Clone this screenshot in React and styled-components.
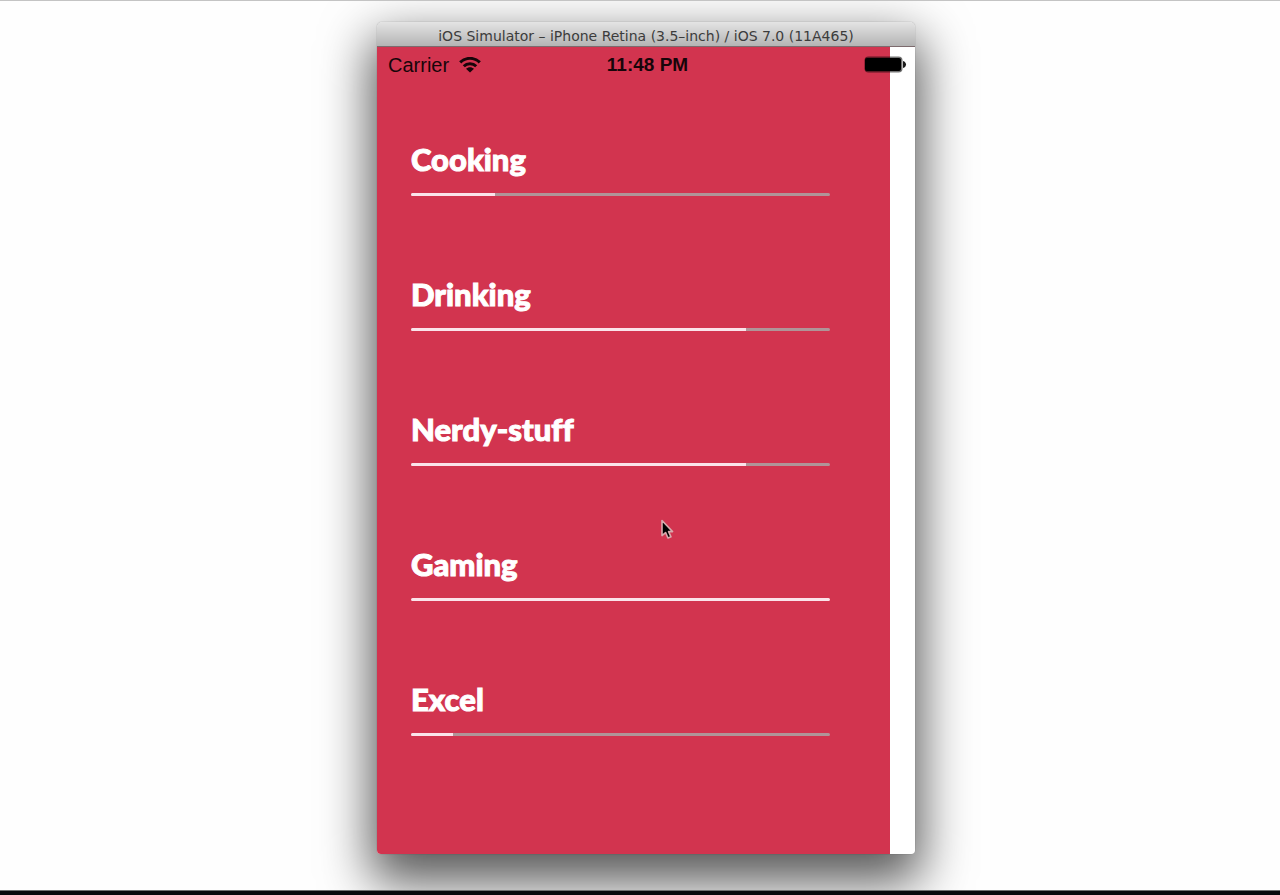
import React from 'react'
import styled, { createGlobalStyle } from 'styled-components'

const categories = [
  { id: 'cooking', name: 'Cooking', level: 20 },
  { id: 'drinking', name: 'Drinking', level: 80 },
  { id: 'nerdy', name: 'Nerdy-stuff', level: 80 },
  { id: 'gaming', name: 'Gaming', level: 100 },
  { id: 'excel', name: 'Excel', level: 10 },
]

const WifiIcon = () => (
  <svg width='22' height='16' viewBox='0 0 22 16' fill='none' aria-hidden='true'>
    <path d='M1.2 5.4C6.6 0 15.4 0 20.8 5.4' stroke='#170509' strokeWidth='3' />
    <path d='M4.8 9.2C8.1 5.8 13.9 5.8 17.2 9.2' stroke='#170509' strokeWidth='3' />
    <path d='M11 15.6L7 11.8C9.3 9.7 12.7 9.7 15 11.8Z' fill='#170509' />
  </svg>
)

const BatteryIcon = () => (
  <svg width='43' height='18' viewBox='0 0 43 18' aria-hidden='true'>
    <rect x='0.5' y='0.5' width='38' height='16' rx='4' fill='#000' fillOpacity='0.55' />
    <rect x='1' y='2' width='36' height='13' rx='2' fill='#000' />
    <path d='M39 5C41 5.5 42 7 42 8.5S41 11.5 39 12Z' fill='#1a1a1a' />
  </svg>
)

const App = () => {
  return (
    <>
      <GlobalStyle />
      <Desktop>
        <Stage>
          <Simulator>
            <TitleBar>
              iOS Simulator – iPhone Retina (3.5–inch) / iOS 7.0 (11A465)
            </TitleBar>
            <Screen>
              <Menu>
                {categories.map((category) => (
                  <Category key={category.id}>
                    <Name htmlFor={category.id}>{category.name}</Name>
                    <Level id={category.id} max='100' value={category.level} />
                  </Category>
                ))}
              </Menu>
              <StatusBar>
                <Carrier>
                  Carrier
                  <WifiIcon />
                </Carrier>
                <Time>11:48 PM</Time>
                <Battery>
                  <BatteryIcon />
                </Battery>
              </StatusBar>
              <Pointer width='14' height='22' viewBox='0 0 14 22' aria-hidden='true'>
                <path
                  d='M1 1.5V16.6L4.6 13.6L7 19L10 17.8L7.6 12.6H11.6Z'
                  fill='#000'
                  stroke='#d9a9ad'
                  strokeWidth='1.6'
                  strokeLinejoin='round'
                />
              </Pointer>
            </Screen>
          </Simulator>
        </Stage>
        <Dock />
      </Desktop>
    </>
  )
}

export default App

const GlobalStyle = createGlobalStyle`
  * {
    box-sizing: border-box;
  }
  body {
    margin: 0;
    background: #fefefe;
    font-family: 'Liberation Sans', Arial, sans-serif;
  }
`

const Desktop = styled.div`
  display: flex;
  flex-direction: column;
  min-height: 100vh;
  border-top: 1px solid #c4c4c4;
`

const Stage = styled.main`
  flex: 1;
  display: flex;
  justify-content: center;
  align-items: flex-start;
  padding: 21px 0 36px 12px;
  overflow: hidden;
`

const Simulator = styled.section`
  width: 100%;
  max-width: 538px;
  border-radius: 5px;
  box-shadow: 0 0 1px rgba(0, 0, 0, 0.5), 0 22px 50px 6px rgba(0, 0, 0, 0.66);
`

const TitleBar = styled.header`
  height: 25px;
  line-height: 28px;
  text-align: center;
  font-family: 'DejaVu Sans', sans-serif;
  font-size: 14px;
  color: #3c3c3c;
  background: linear-gradient(#e4e4e4, #b4b4b4);
  border-bottom: 1px solid #7d6b6e;
  border-radius: 5px 5px 0 0;
`

const Screen = styled.div`
  position: relative;
  display: grid;
  background: #fff;
  border-radius: 0 0 4px 4px;
  overflow: hidden;

  > * {
    grid-area: 1 / 1;
  }
`

const Menu = styled.ul`
  display: flex;
  flex-direction: column;
  gap: 78px;
  margin: 0 25px 0 0;
  padding: 92px 60px 118px 34px;
  list-style: none;
  background: #d2344f;
`

const Category = styled.li`
  display: flex;
  flex-direction: column;
  gap: 14px;
`

const Name = styled.label`
  font-family: Lato, sans-serif;
  font-size: 31px;
  font-weight: 900;
  font-variant-ligatures: none;
  line-height: 40px;
  color: #fff;
  -webkit-text-stroke: 1px #fff;
`

const Level = styled.progress`
  appearance: none;
  display: block;
  width: 100%;
  height: 3px;
  border: none;
  border-radius: 2px;
  overflow: hidden;
  background: #b09498;

  &::-webkit-progress-bar {
    background: #b09498;
  }
  &::-webkit-progress-value {
    background: #fbe3ea;
  }
`

const StatusBar = styled.div`
  display: grid;
  grid-template-columns: 1fr auto 1fr;
  align-items: center;
  align-self: start;
  height: 36px;
  padding: 0 8px 0 11px;
  color: #170509;
`

const Carrier = styled.span`
  display: flex;
  align-items: center;
  gap: 10px;
  font-size: 20px;
`

const Time = styled.span`
  font-size: 19px;
  font-weight: 700;
`

const Battery = styled.span`
  display: flex;
  justify-content: flex-end;
`

const Pointer = styled.svg`
  position: absolute;
  top: 472px;
  left: 284px;
`

const Dock = styled.footer`
  height: 5px;
  background: #06090c;
  border-top: 1px solid #6d7070;
`
